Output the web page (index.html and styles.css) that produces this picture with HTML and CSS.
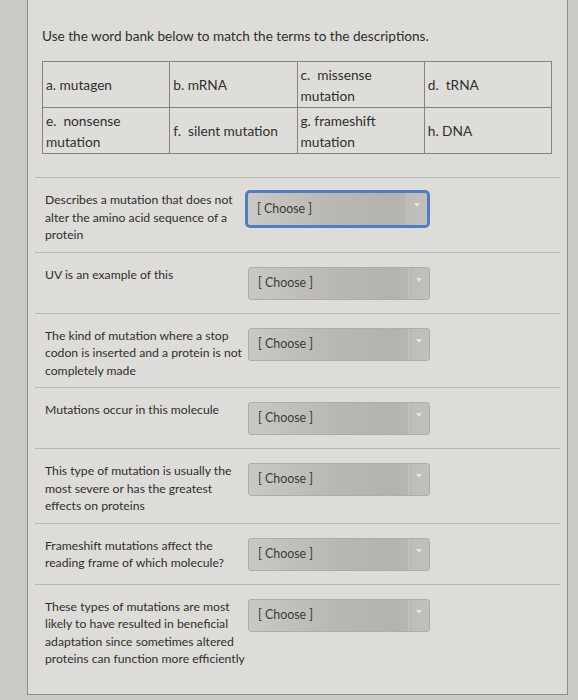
FILE: index.html
```html
<!DOCTYPE html>
<html lang="en">
<head>
<meta charset="utf-8">
<title>Matching question</title>
<link rel="stylesheet" href="styles.css">
</head>
<body>
<div class="card">
  <p class="prompt">Use the word bank below to match the terms to the descriptions.</p>
  <table class="bank">
    <tr>
      <td>a. mutagen</td>
      <td>b. mRNA</td>
      <td>c.&nbsp; missense<br>mutation</td>
      <td>d.&nbsp; tRNA</td>
    </tr>
    <tr>
      <td>e.&nbsp; nonsense<br>mutation</td>
      <td>f.&nbsp; silent mutation</td>
      <td>g. frameshift<br>mutation</td>
      <td>h. DNA</td>
    </tr>
  </table>

  <div class="answers">
    <div class="answer">
      <div class="question">Describes a mutation that does not alter the amino acid sequence of a protein</div>
      <div class="select focused"><span class="value">[ Choose ]</span><span class="arrow"></span></div>
    </div>
    <div class="answer">
      <div class="question">UV is an example of this</div>
      <div class="select"><span class="value">[ Choose ]</span><span class="arrow"></span></div>
    </div>
    <div class="answer">
      <div class="question">The kind of mutation where a stop codon is inserted and a protein is not completely made</div>
      <div class="select"><span class="value">[ Choose ]</span><span class="arrow"></span></div>
    </div>
    <div class="answer">
      <div class="question">Mutations occur in this molecule</div>
      <div class="select"><span class="value">[ Choose ]</span><span class="arrow"></span></div>
    </div>
    <div class="answer">
      <div class="question">This type of mutation is usually the most severe or has the greatest effects on proteins</div>
      <div class="select"><span class="value">[ Choose ]</span><span class="arrow"></span></div>
    </div>
    <div class="answer">
      <div class="question">Frameshift mutations affect the reading frame of which molecule?</div>
      <div class="select"><span class="value">[ Choose ]</span><span class="arrow"></span></div>
    </div>
    <div class="answer last">
      <div class="question">These types of mutations are most likely to have resulted in beneficial adaptation since sometimes altered proteins can function more efficiently</div>
      <div class="select"><span class="value">[ Choose ]</span><span class="arrow"></span></div>
    </div>
  </div>
</div>
</body>
</html>
```

FILE: styles.css
```css
html, body {
  margin: 0;
  padding: 0;
}

body {
  background: #cbc9c5;
  font-family: Lato, "Open Sans", sans-serif;
  color: #2e2e2e;
  height: 700px;
  overflow: hidden;
}

.card {
  margin-left: 27px;
  width: 541px;
  height: 695px;
  box-sizing: border-box;
  background: #dedcd8;
  border-left: 1px solid #8f8d8a;
  border-right: 1px solid #8f8d8a;
  border-bottom: 1px solid #8f8d8a;
  padding: 27px 17px 0 14px;
}

.prompt {
  margin: 0;
  font-size: 13.6px;
  line-height: 18px;
}

.bank {
  margin-top: 16px;
  width: 510px;
  border-collapse: collapse;
  font-size: 13.7px;
  table-layout: fixed;
  background: #dfddd9;
}

.bank td {
  border: 1.5px solid #858380;
  height: 45px;
  padding: 0 3px;
  line-height: 21px;
  vertical-align: middle;
  width: 25%;
}

.answers {
  margin-top: 23px;
  margin-left: -7px;
  margin-right: -10px;
}

.answer {
  display: flex;
  align-items: flex-start;
  border-top: 1.5px solid #b9b7b3;
  padding: 12px 0 8px 10px;
}

.answer.last {
  padding-bottom: 0;
}

.question {
  width: 205px;
  font-size: 12.2px;
  line-height: 17.5px;
  padding-top: 1px;
}

.select {
  margin: 2px 0 5px -2px;
  width: 182px;
  height: 33px;
  box-sizing: border-box;
  display: flex;
  align-items: center;
  border: 1px solid #aeada9;
  border-radius: 3px;
  background: linear-gradient(90deg, #c9c8c4 0%, #b9b8b4 45%, #b3b2ae 80%, #bebdb9 100%);
  font-size: 12.4px;
  color: #3a3a3a;
}

.select.focused {
  margin: 0 0 0 -5px;
  width: 185px;
  height: 38px;
  border: 3px solid #4f7fc0;
  border-radius: 5px;
}

.value {
  flex: 1;
  padding-left: 9px;
  padding-bottom: 2px;
}

.arrow {
  width: 20px;
  align-self: stretch;
  position: relative;
  border-left: 1px solid rgba(255, 255, 255, 0.12);
  background: rgba(255, 255, 255, 0.06);
}

.arrow::after {
  content: "";
  position: absolute;
  right: 7px;
  top: 10px;
  border-left: 3px solid transparent;
  border-right: 3px solid transparent;
  border-top: 4px solid #e6e5e2;
}
```
